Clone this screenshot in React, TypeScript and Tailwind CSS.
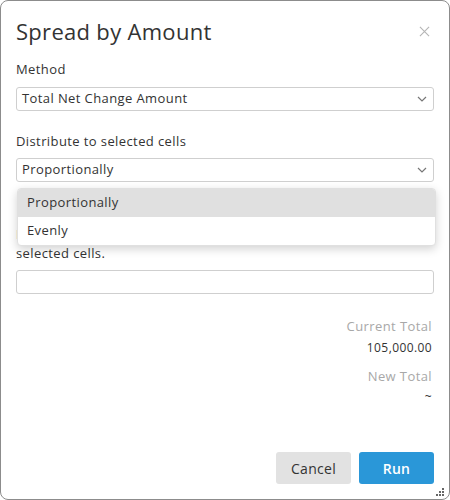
import React from "react";

const font = { fontFamily: '"Open Sans", "Liberation Sans", sans-serif' };

const Chevron = () => (
  <svg width="10" height="6" viewBox="0 0 10 6" className="text-[#777]">
    <path d="M1 1l4 4 4-4" fill="none" stroke="currentColor" strokeWidth="1.2" />
  </svg>
);

const SelectBox: React.FC<{ value: string }> = ({ value }) => (
  <div className="flex h-6 items-center justify-between rounded-[3px] border border-[#cfcfcf] bg-white pl-[5px] pr-[6px] text-[13px] tracking-[0.4px] text-[#333]">
    <span>{value}</span>
    <Chevron />
  </div>
);

export default function App() {
  return (
    <div
      className="relative flex h-[500px] w-[450px] flex-col rounded-lg border border-[#8c8c8c] bg-white px-[15px]"
      style={font}
    >
      {/* Header */}
      <div className="flex items-center justify-between pt-[14px]">
        <h2 className="text-[22px] leading-8 tracking-[0.3px] text-[#333]">Spread by Amount</h2>
        <svg width="11" height="11" viewBox="0 0 12 12" className="mr-[4px] text-[#b5b5b5]">
          <path d="M1 1l10 10M11 1L1 11" stroke="currentColor" strokeWidth="1.2" />
        </svg>
      </div>

      {/* Method */}
      <div className="mt-[13px] text-[13px] font-medium tracking-[0.4px] text-[#333]">Method</div>
      <div className="mt-[7px]">
        <SelectBox value="Total Net Change Amount" />
      </div>

      {/* Distribute */}
      <div className="mt-[21px] text-[13px] font-medium tracking-[0.4px] text-[#333]">Distribute to selected cells</div>
      <div className="relative mt-[7px]">
        <SelectBox value="Proportionally" />
        {/* Open dropdown list */}
        <div className="absolute left-[1px] right-[-2px] top-[30px] z-10 overflow-hidden rounded-[4px] border border-[#e0e0e0] bg-white text-[13px] tracking-[0.4px] text-[#333] shadow-[0_3px_10px_rgba(0,0,0,0.18)]">
          <div className="flex h-7 items-center bg-[#e0e0e0] px-[9px]">Proportionally</div>
          <div className="flex h-7 items-center px-[9px]">Evenly</div>
        </div>
      </div>

      {/* Description + amount */}
      <p className="mt-[43px] text-[13px] leading-[19px] tracking-[0.4px] text-[#333]">
        Enter the total amount to distribute across the
        <br />
        selected cells.
      </p>
      <input className="mt-[7px] h-6 rounded-[3px] border border-[#cfcfcf] outline-none" />

      {/* Totals */}
      <div className="mt-[23px] mr-[2px] flex flex-col items-end text-[13px] tracking-[0.4px]">
        <span className="text-[#a8a8a8]">Current Total</span>
        <span className="mt-[2px] text-[12px] text-[#333]">105,000.00</span>
        <span className="mt-[10px] text-[#a8a8a8]">New Total</span>
        <span className="mt-[2px] text-[12px] text-[#333]">~</span>
      </div>

      {/* Footer */}
      <div className="mt-auto mb-[15px] flex justify-end gap-2">
        <button className="h-8 w-[75px] rounded-[3px] bg-[#e2e2e2] text-[14px] tracking-[0.3px] text-[#333]">Cancel</button>
        <button className="h-8 w-[75px] rounded-[3px] bg-[#2a97d8] text-[14px] font-semibold tracking-[0.3px] text-white">Run</button>
      </div>

      {/* Resize grip */}
      <svg width="8" height="8" viewBox="0 0 8 8" className="absolute bottom-[3px] right-[5px] text-[#666]">
        <rect x="6" y="0" width="2" height="2" fill="currentColor" />
        <rect x="3" y="3" width="2" height="2" fill="currentColor" />
        <rect x="6" y="3" width="2" height="2" fill="currentColor" />
        <rect x="0" y="6" width="2" height="2" fill="currentColor" />
        <rect x="3" y="6" width="2" height="2" fill="currentColor" />
        <rect x="6" y="6" width="2" height="2" fill="currentColor" />
      </svg>
    </div>
  );
}
